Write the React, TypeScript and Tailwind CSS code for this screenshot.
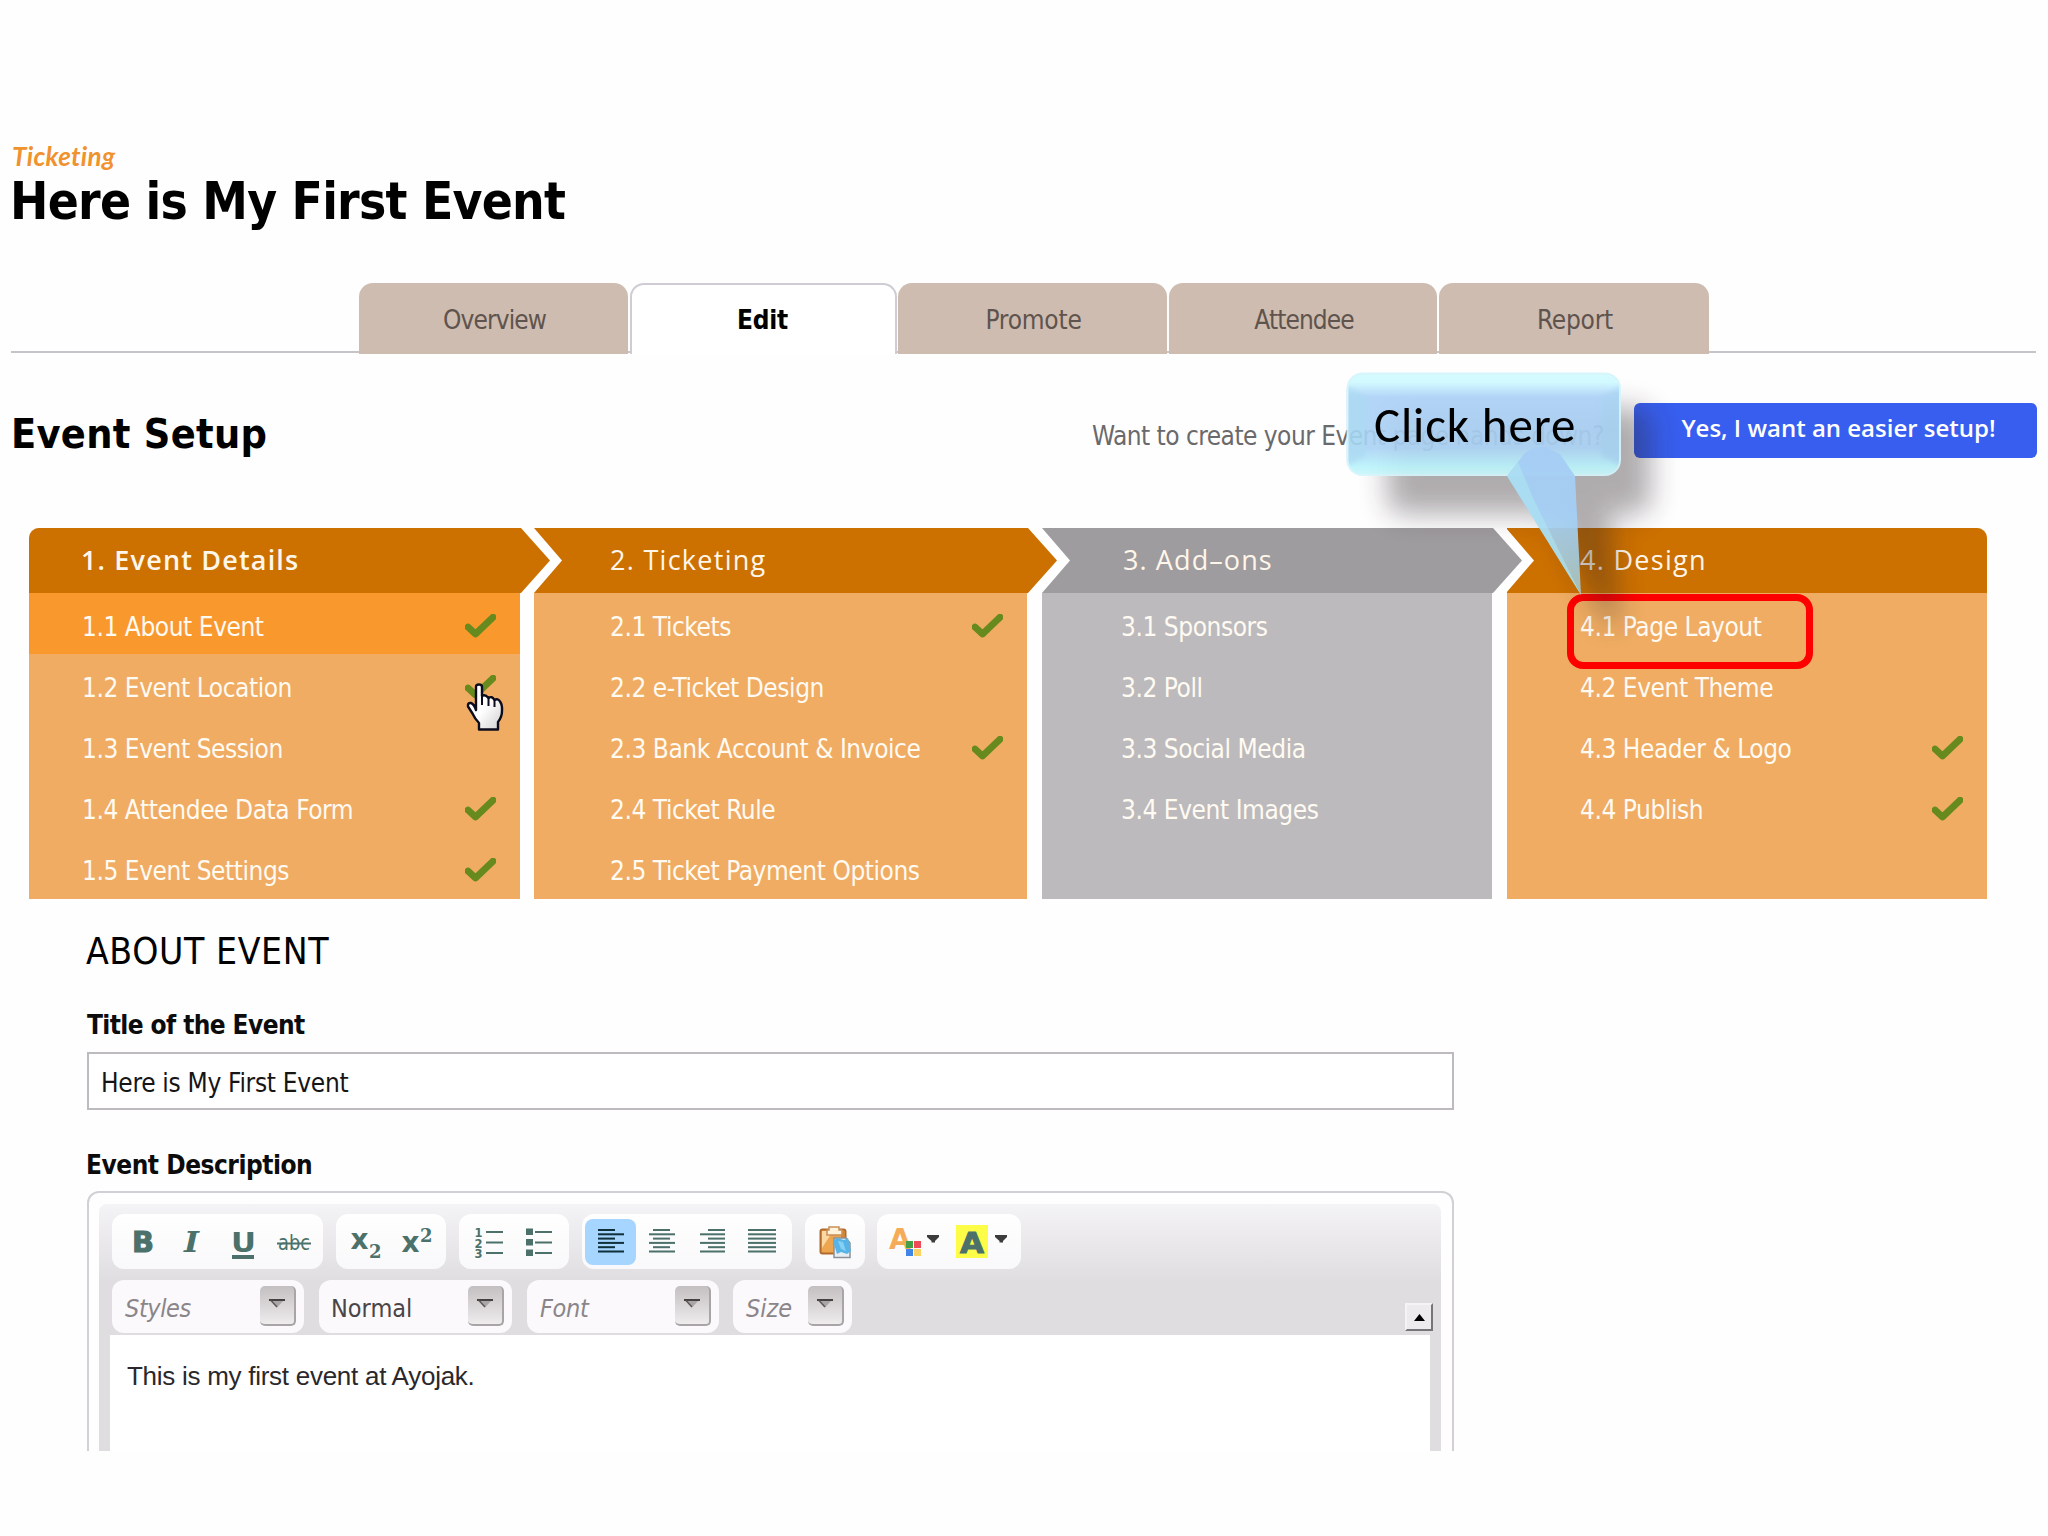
import { ReactNode } from 'react'
import clsx from 'clsx'

const tabs = [
  { label: 'Overview', className: 'ml-[348px] w-[269px] tracking-[-0.86px]' },
  { label: 'Edit', className: 'ml-[2px] w-[267px] tracking-[-0.25px]', active: true },
  { label: 'Promote', className: 'ml-px w-[269px] tracking-[-0.21px]' },
  { label: 'Attendee', className: 'ml-[2px] w-[268px] tracking-[-0.91px]' },
  { label: 'Report', className: 'ml-[2px] w-[270px] tracking-[-0.25px]' },
]

const steps = [
  {
    title: '1. Event Details',
    column: 'w-[491px] bg-[#efac62] rounded-tl-[10px]',
    header: 'pl-[52px] bg-[#cc7000] rounded-tl-[10px] font-semibold tracking-[1.17px]',
    pad: 'pl-[53px]',
    arrow: '#cc7000',
    gap: 14,
    items: [
      { label: '1.1 About Event', done: true, active: true },
      { label: '1.2 Event Location', done: true },
      { label: '1.3 Event Session' },
      { label: '1.4 Attendee Data Form', done: true },
      { label: '1.5 Event Settings', done: true },
    ],
  },
  {
    title: '2. Ticketing',
    column: 'ml-[14px] w-[493px] bg-[#efac62]',
    header: 'pl-[76px] bg-[#cc7000] tracking-[1.28px]',
    pad: 'pl-[76px]',
    arrow: '#cc7000',
    gap: 15,
    items: [
      { label: '2.1 Tickets', done: true },
      { label: '2.2 e-Ticket Design' },
      { label: '2.3 Bank Account & Invoice', done: true },
      { label: '2.4 Ticket Rule' },
      { label: '2.5 Ticket Payment Options' },
    ],
  },
  {
    title: '3. Add–ons',
    column: 'ml-[15px] w-[450px] bg-[#bcbabc]',
    header: 'pl-[81px] bg-[#9e9c9e] tracking-[1.1px]',
    pad: 'pl-[79px]',
    arrow: '#9e9c9e',
    gap: 14,
    items: [
      { label: '3.1 Sponsors' },
      { label: '3.2 Poll' },
      { label: '3.3 Social Media' },
      { label: '3.4 Event Images' },
    ],
  },
  {
    title: '4. Design',
    column: 'ml-[15px] w-[480px] bg-[#efac62] rounded-tr-[10px]',
    header: 'pl-[73px] bg-[#cc7000] rounded-tr-[10px] tracking-[1.3px]',
    pad: 'pl-[73px]',
    items: [
      { label: '4.1 Page Layout', boxed: true },
      { label: '4.2 Event Theme' },
      { label: '4.3 Header & Logo', done: true },
      { label: '4.4 Publish', done: true },
    ],
  },
]

function Check() {
  return (
    <svg width="31" height="24" viewBox="0 0 31 24" className="mb-[3px] mr-6 shrink-0">
      <path d="M3 13 L10.5 20 L28 3.2" fill="none" stroke="#678a1e" strokeWidth="6.8" strokeLinecap="round" strokeLinejoin="round" />
    </svg>
  )
}

function Hand() {
  return (
    <svg width="38" height="48" viewBox="0 0 38 48" className="absolute left-[437px] top-[29px] z-10">
      <defs>
        <linearGradient id="hand" x1="0" y1="0" x2="1" y2="1">
          <stop offset="0.5" stopColor="#fff" />
          <stop offset="1" stopColor="#cfcfcf" />
        </linearGradient>
      </defs>
      <path
        d="M10 4 Q10 1.5 13 1.5 Q16 1.5 16 4 V13 Q19 11 22.5 15 Q26 12.500 28.500 17 Q32 15 34 18.500 Q36.500 22 36 28 Q36 34 32 39 V46.500 H13 V40 Q9 36 6.500 30.500 L2 23.500 Q1.500 19.500 5 20 Q8 21 10 27 Z"
        fill="url(#hand)" stroke="#0c0c1c" strokeWidth="2.4" strokeLinejoin="round"
      />
      <path d="M16 12 V22 M22.500 14.500 V23 M28.500 17 V24" stroke="#0c0c1c" strokeWidth="2" fill="none" />
    </svg>
  )
}

function Callout() {
  return (
    <div className="absolute left-[1320px] top-[350px] z-20 h-[300px] w-[400px]">
      <svg width="400" height="300" viewBox="0 0 400 300">
        <defs>
          <filter id="soft" x="-30%" y="-30%" width="170%" height="160%">
            <feGaussianBlur stdDeviation="14" />
          </filter>
          <filter id="edge" x="-10%" y="-10%" width="120%" height="120%">
            <feGaussianBlur stdDeviation="2.5" />
          </filter>
          <linearGradient id="face" x1="0" y1="0" x2="0" y2="1">
            <stop offset="0" stopColor="#d2fdff" />
            <stop offset="0.1" stopColor="#cdf9ff" />
            <stop offset="0.24" stopColor="#acd1f8" />
            <stop offset="0.72" stopColor="#acd3f6" />
            <stop offset="0.9" stopColor="#b9f3fb" />
            <stop offset="1" stopColor="#cdf8fa" />
          </linearGradient>
          <linearGradient id="tail" x1="0" y1="0" x2="0" y2="1">
            <stop offset="0" stopColor="#a6cdf5" />
            <stop offset="0.45" stopColor="#a4cff5" />
            <stop offset="1" stopColor="#a3d3e0" stopOpacity="0.85" />
          </linearGradient>
          <clipPath id="body">
            <rect x="26.500" y="22.500" width="274.500" height="103.500" rx="16" />
          </clipPath>
        </defs>
        <g transform="translate(37 38)" filter="url(#soft)" fill="#2a2228" opacity="0.37">
          <rect x="30" y="20" width="264" height="106" rx="16" />
          <path d="M190 120 H252 L262 236 L250 236 Z" />
        </g>
        <g clipPath="url(#body)" opacity="0.91">
          <rect x="26" y="22" width="276" height="105" fill="#fff" />
          <rect x="26" y="22" width="276" height="105" fill="url(#face)" />
          <g filter="url(#edge)" opacity="0.8">
            <path d="M26 36 L46 47 V106 L26 116 Z" fill="#a5d8f2" />
            <path d="M302 36 L281 47 V106 L302 116 Z" fill="#a5d3f2" />
          </g>
          <rect x="27.500" y="23.500" width="272.500" height="101.500" rx="15" fill="none" stroke="#d3f4fb" strokeWidth="2" />
        </g>
        <path d="M187 126 L204 104 Q213 96 225 97 L240 104 L255 126 L261 245 Z" fill="url(#tail)" opacity="0.95" />
        <path d="M187 126 L198 112 L214 150 L261 245 Z" fill="#aee6f2" opacity="0.6" />
      </svg>
      <span className="absolute left-[54px] top-[45px] whitespace-nowrap font-[Carlito,sans-serif] text-[49px] leading-[60px] tracking-[0.86px] text-black">
        Click here
      </span>
    </div>
  )
}

function Group({ children, className }: { children: ReactNode; className?: string }) {
  return (
    <div className={clsx('flex h-[55px] items-center rounded-[12px] bg-linear-to-b from-white to-[#f9f8fa]', className)}>
      {children}
    </div>
  )
}

function Slot({ children, active }: { children: ReactNode; active?: boolean }) {
  return (
    <div className={clsx('flex h-[46px] w-[51px] items-center justify-center rounded-lg', active && 'bg-[#a6d5ff]')}>
      <svg width="40" height="36" viewBox="0 0 40 36" fill="#4b716a" className="overflow-visible">
        {children}
      </svg>
    </div>
  )
}

// six text lines, short and long in turn
function Lines({ x, short, long, color }: { x: [number, number]; short: number; long: number; color: string }) {
  return (
    <>
      {[0, 1, 2, 3, 4, 5].map((i) => (
        <rect key={i} x={i % 2 ? x[1] : x[0]} y={5 + i * 4.3} width={i % 2 ? long : short} height="2" fill={color} />
      ))}
    </>
  )
}

function Arrow() {
  return (
    <svg width="12" height="8" viewBox="0 0 12 8">
      <path d="M0 0 H12 V2 L8 6 V7.500 H4.500 V6 L0 2 Z" fill="#3c3c3c" />
    </svg>
  )
}

function Select({ label, className, textClass }: { label: string; className: string; textClass: string }) {
  return (
    <div className={clsx('flex h-[53px] items-center justify-between rounded-[12px] bg-[#fbf9fb] pr-2', className)}>
      <span className={clsx('pt-[5px] text-[25px]', textClass)}>{label}</span>
      <span className="mb-px flex h-10 w-9 items-center justify-center rounded-[5px] border-r-2 border-b-2 border-[#a9a5a7] bg-linear-to-b from-[#c4bfc0] to-[#eeeced]">
        <svg width="16" height="9" viewBox="0 0 16 9" className="mb-1">
          <path d="M1 1 H15 L8 8.500 Z" fill="#aaa6a6" />
          <path d="M0 0 H16 V2 H0 Z" fill="#454142" />
          <path d="M2 1.500 L8 8" stroke="#5b5758" strokeWidth="1.500" />
        </svg>
      </span>
    </div>
  )
}

function Toolbar() {
  return (
    <div className="relative h-[131px] rounded-t-[8px] bg-linear-to-b from-[#f4f3f5] via-[#dfdde0] via-60% to-[#dfdde0] pl-[13px] pt-[10px]">
      <div className="flex gap-[13px]">
        <Group className="w-[211px] px-[3.5px]">
          <Slot>
            <text x="11" y="28" fontFamily="DejaVu Sans" fontWeight="700" fontSize="28" stroke="#4b716a" textLength="22" lengthAdjust="spacingAndGlyphs">B</text>
          </Slot>
          <Slot>
            <text x="12" y="28" fontFamily="DejaVu Serif" fontWeight="700" fontStyle="italic" fontSize="28" textLength="15" lengthAdjust="spacingAndGlyphs">I</text>
          </Slot>
          <Slot>
            <text x="8" y="27.500" fontFamily="DejaVu Sans" fontWeight="700" fontSize="27" textLength="25" lengthAdjust="spacingAndGlyphs">U</text>
            <rect x="9" y="31" width="22" height="4" />
          </Slot>
          <Slot>
            <text x="4" y="26" fontFamily="DejaVu Sans" fontSize="22" textLength="32" lengthAdjust="spacingAndGlyphs">abc</text>
            <rect x="3" y="18.500" width="34" height="2" />
          </Slot>
        </Group>
        <Group className="w-[110px] px-1">
          <Slot>
            <text x="4.500" y="25" fontFamily="DejaVu Sans" fontWeight="700" fontSize="29" textLength="18" lengthAdjust="spacingAndGlyphs">x</text>
            <text x="23" y="34" fontFamily="DejaVu Serif" fontWeight="700" fontSize="18">2</text>
          </Slot>
          <Slot>
            <text x="4.500" y="28" fontFamily="DejaVu Sans" fontWeight="700" fontSize="29" textLength="18" lengthAdjust="spacingAndGlyphs">x</text>
            <text x="23" y="18" fontFamily="DejaVu Serif" fontWeight="700" fontSize="18">2</text>
          </Slot>
        </Group>
        <Group className="w-[110px] px-1">
          <Slot>
            {['1', '2', '3'].map((n, i) => (
              <text key={n} x="5.500" y={13 + i * 10.5} fontFamily="DejaVu Sans" fontWeight="700" fontSize="11.500">{n}</text>
            ))}
            {[0, 1, 2].map((i) => (
              <rect key={i} x="17" y={7 + i * 10.5} width="17" height="2" />
            ))}
          </Slot>
          <Slot>
            {[0, 1, 2].map((i) => (
              <g key={i}>
                <rect x="6" y={4.5 + i * 10.5} width="7" height="6.500" />
                <rect x="15" y={7 + i * 10.5} width="17" height="2" />
              </g>
            ))}
          </Slot>
        </Group>
        <Group className="w-[210px] px-[3px]">
          <Slot active>
            <Lines x={[7, 7]} short={17} long={26} color="#0f2f3a" />
          </Slot>
          <Slot>
            <Lines x={[11, 7]} short={17} long={26} color="#4b716a" />
          </Slot>
          <Slot>
            <Lines x={[15, 7]} short={17} long={25} color="#4b716a" />
          </Slot>
          <Slot>
            <Lines x={[4, 4]} short={28} long={28} color="#4b716a" />
          </Slot>
        </Group>
        <Group className="w-[60px] justify-center pt-0.5">
          <svg width="33" height="33" viewBox="0 0 33 33">
            <rect x="1.500" y="3.500" width="25" height="24" rx="2" fill="#eda550" stroke="#b06a2c" strokeWidth="2" />
            <path d="M3 5 H14 L3 22 Z" fill="#fbd9a0" />
            <path d="M22 5 h3.500 v12 h-3.500 Z" fill="#d9822f" />
            <path d="M10 1 H20 V4 H23 V9 H8 V4 H10 Z" fill="#fff3dc" stroke="#c98f55" strokeWidth="1.500" />
            <path d="M15 12 H27 L31 17 V31.500 H15 Z" fill="#e6eef4" stroke="#8a9199" strokeWidth="1.500" />
            <path d="M14 15 L18 12 L25 14 L29 12 L32 25 L28 28 L22 26 L18 28 Z" fill="#57b4e6" />
            <path d="M19 15 l5 1 l3 9 l-5 -2 Z" fill="#86d0f4" />
          </svg>
        </Group>
        <Group className="-ml-px w-[144px] pl-[12px]">
          <svg width="34" height="32" viewBox="0 0 34 32" className="mt-0.5 overflow-visible">
            <text x="0" y="21.500" fontFamily="DejaVu Sans" fontWeight="700" fontSize="28" fill="#f5ac58" textLength="22" lengthAdjust="spacingAndGlyphs">A</text>
            <rect x="17" y="14" width="7" height="7" fill="#43a047" />
            <rect x="25" y="14" width="7" height="7" fill="#ef4a5a" />
            <rect x="17" y="22" width="7" height="7" fill="#4285e8" />
            <rect x="25" y="22" width="7" height="7" fill="#fbd263" />
          </svg>
          <span className="mb-[6px] ml-1">
            <Arrow />
          </span>
          <svg width="32" height="33" viewBox="0 0 32 33" className="mb-px ml-[17px] overflow-visible">
            <rect width="32" height="33" fill="#fdfd47" />
            <text x="4" y="27.500" fontFamily="DejaVu Sans" fontWeight="700" fontSize="28" fill="#4b716a" stroke="#4b716a" textLength="24" lengthAdjust="spacingAndGlyphs">A</text>
          </svg>
          <span className="mb-[6px] ml-[7px]">
            <Arrow />
          </span>
        </Group>
      </div>
      <div className="mt-[11px] flex">
        <Select label="Styles" className="w-[192px] pl-[13px]" textClass="italic text-[#8a8589] tracking-[-0.4px]" />
        <Select label="Normal" className="ml-[15px] w-[193px] pl-[12px]" textClass="text-[#4a4547]" />
        <Select label="Font" className="ml-[15px] w-[192px] pl-[13px]" textClass="italic text-[#8a8589] tracking-[-0.32px]" />
        <Select label="Size" className="ml-[14px] w-[119px] pl-[13px]" textClass="italic text-[#8a8589]" />
      </div>
      <div className="absolute right-[8px] top-[99px] flex h-[28px] w-[28px] items-center justify-center border-2 border-t-[#f4f3f5] border-r-[#77757a] border-b-[#77757a] border-l-[#f4f3f5] bg-[#edebed]">
        <svg width="11" height="7" viewBox="0 0 11 7">
          <path d="M5.500 0 L11 7 H0 Z" />
        </svg>
      </div>
    </div>
  )
}

export default function App() {
  return (
    <div className="relative h-[1536px] w-[2048px] overflow-hidden bg-[#fefefe] pt-[140px] font-['DejaVu_Sans_Condensed','DejaVu_Sans',sans-serif] text-[26px]">
      <div className="ml-[12px] h-8 font-[Lato,sans-serif] font-bold italic leading-8 tracking-[0.3px] text-[#f0922e]">Ticketing</div>
      <h1 className="ml-[10px] h-[60px] whitespace-nowrap text-[51px] font-bold leading-[60px] tracking-[-0.75px] text-black">
        Here is My First Event
      </h1>

      <div className="ml-[11px] mt-[51px] flex h-[71px] w-[2025px] items-end bg-[linear-gradient(to_top,transparent_1px,#c6c4c8_1px,#c6c4c8_3px,transparent_3px)]">
        {tabs.map((tab) => (
          <div
            key={tab.label}
            className={clsx(
              'h-[71px] rounded-t-[14px] pl-[2px] text-center',
              tab.active
                ? 'border-2 border-b-0 border-[#cfcdd3] bg-white pr-1 font-bold leading-[70px] text-black'
                : 'bg-[#cebcb0] pt-px leading-[73px] text-[#5f534d]',
              tab.className,
            )}
          >
            {tab.label}
          </div>
        ))}
      </div>

      <div className="mt-[49px] flex h-[55px] w-[2037px]">
        <h2 className="ml-[11px] flex-1 text-[41px] font-bold leading-[62px] tracking-[0.3px] text-black">Event Setup</h2>
        <span className="w-[542px] whitespace-nowrap leading-[66px] tracking-[-0.53px] text-[#6a696b]">
          Want to create your Event page hands down?
        </span>
        <button className="block h-[55px] w-[403px] rounded-[6px] bg-[#375eee] pb-1.5 pl-1.5 text-center font-['Open_Sans',sans-serif] text-[24px] font-semibold leading-[49px] text-white">
          Yes, I want an easier setup!
        </button>
      </div>

      <div className="ml-[29px] mt-[70px] flex h-[371px]">
        {steps.map((step) => (
          <div key={step.title} className={step.column}>
            <div className={clsx("relative h-[65px] font-['Open_Sans',sans-serif] text-[27px] leading-[63px] text-[#fff6ea]", step.header)}>
              {step.title}
              {step.arrow && (
                <svg width="46" height="65" viewBox="0 0 46 65" className="absolute left-full top-0 z-10">
                  <path d={`M0 0 H${step.gap} L${step.gap! + 28} 32.500 L${step.gap} 65 H0 Z`} fill="#fff" />
                  <path d="M0 0 H1 L30 32.500 L1 65 H0 Z" fill={step.arrow} />
                </svg>
              )}
            </div>
            {step.items.map((item) => (
              <div
                key={item.label}
                className={clsx(
                  'relative flex h-[61.2px] items-center justify-between whitespace-nowrap pt-[7px] tracking-[-0.44px] text-[#fffaf2]',
                  'active' in item && 'bg-[#f9982d]',
                  step.pad,
                )}
              >
                {item.label}
                {'done' in item && <Check />}
                {item.label === '1.2 Event Location' && <Hand />}
                {'boxed' in item && <div className="absolute left-[60px] top-px h-[75px] w-[246px] rounded-[16px] border-[7px] border-[#fe0000]" />}
              </div>
            ))}
          </div>
        ))}
      </div>

      <div className="ml-[87px] w-[1367px]">
        <h3 className="-ml-px mt-[31px] h-11 text-[37px] leading-[44px] tracking-[0.6px] text-black">ABOUT EVENT</h3>
        <label className="mt-[35px] block h-8 font-bold leading-[33px] tracking-[-0.6px] text-[#0c0c0c]">Title of the Event</label>
        <div className="mt-[11px] h-[58px] border-2 border-[#bdbbbf] bg-white pl-[12px] pt-[2px] leading-[54px] tracking-[-0.3px] text-[#151515]">
          Here is My First Event
        </div>
        <label className="-ml-px mt-[39px] block h-8 font-bold leading-[33px] tracking-[-0.48px] text-[#0c0c0c]">Event Description</label>
        <div className="mt-[10px] h-[260px] rounded-t-[12px] border-2 border-b-0 border-[#d2d0d5] bg-[#fefefe] pl-[10px] pr-[11px] pt-[11px]">
          <Toolbar />
          <div className="h-[116px] border-x-[11px] border-[#dfdde0] bg-white pl-[17px] pt-[21px] font-['Liberation_Sans',sans-serif] leading-[40px] tracking-[-0.27px] text-[#2a282b]">
            This is my first event at Ayojak.
          </div>
        </div>
      </div>

      <Callout />
    </div>
  )
}
